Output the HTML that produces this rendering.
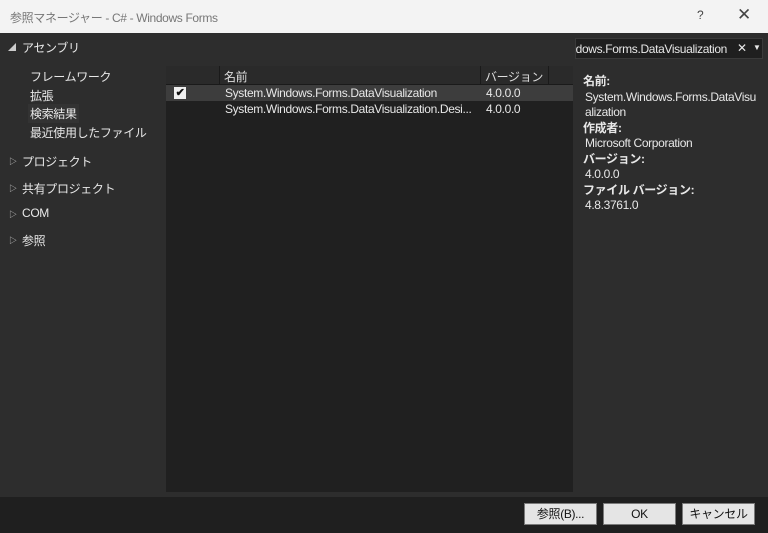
<!DOCTYPE html>
<html><head><meta charset="utf-8"><style>
*{margin:0;padding:0;box-sizing:border-box}
body{width:768px;height:533px;overflow:hidden;background:#2d2d2d;font-family:"Liberation Sans","Noto Sans CJK JP",sans-serif;font-size:12px;letter-spacing:-0.35px;color:#e8e8e8;position:relative}
.abs{position:absolute;white-space:nowrap}
#title{left:0;top:0;width:768px;height:33px;background:#f3f3f3;color:#777;font-size:12px}
#list{left:166px;top:66px;width:407px;height:426px;background:#202020}
.hdr{top:0;height:19px;background:#2a2a2a;border-right:1px solid #1a1a1a;border-bottom:1px solid #1a1a1a;padding:2px 4px;color:#ddd}
#bottom{left:0;top:497px;width:768px;height:36px;background:#1f1f1f}
.btn{top:503px;height:22px;background:#e5e5e5;border:1px solid #7a7a7a;color:#111;text-align:center;line-height:20px;font-size:12px}
.tri{font-size:8px;color:#ccc}
</style></head><body>
<div id="title" class="abs"><span class="abs" style="left:10px;top:9px">参照マネージャー - C# - Windows Forms</span>
<span class="abs" style="left:697px;top:8px;color:#444">?</span>
<span class="abs" style="left:737px;top:5px;color:#444;font-size:17px">✕</span></div>

<span class="abs tri" style="left:8px;top:42px">◢</span>
<span class="abs" style="left:22px;top:39px">アセンブリ</span>
<span class="abs" style="left:30px;top:68px">フレームワーク</span>
<span class="abs" style="left:30px;top:87px">拡張</span>
<span class="abs" style="left:28px;top:104px;background:#333;padding:1px 2px">検索結果</span>
<span class="abs" style="left:30px;top:124px">最近使用したファイル</span>
<span class="abs tri" style="left:9px;top:156px">▷</span><span class="abs" style="left:22px;top:153px">プロジェクト</span>
<span class="abs tri" style="left:9px;top:183px">▷</span><span class="abs" style="left:22px;top:180px">共有プロジェクト</span>
<span class="abs tri" style="left:9px;top:209px">▷</span><span class="abs" style="left:22px;top:206px">COM</span>
<span class="abs tri" style="left:9px;top:235px">▷</span><span class="abs" style="left:22px;top:232px">参照</span>

<div id="list" class="abs">
<div class="abs hdr" style="left:0;width:54px"></div>
<div class="abs hdr" style="left:54px;width:261px">名前</div>
<div class="abs hdr" style="left:315px;width:68px">バージョン</div>
<div class="abs hdr" style="left:383px;width:24px;border-right:none"></div>
<div class="abs" style="left:0;top:19px;width:407px;height:16px;background:#3d3d3d"></div>
<div class="abs" style="left:8px;top:21px;width:12px;height:12px;background:#f0f0f0;color:#111;font-size:11px;line-height:12px;text-align:center;font-weight:bold">✔</div>
<span class="abs" style="left:59px;top:20px">System.Windows.Forms.DataVisualization</span>
<span class="abs" style="left:320px;top:20px">4.0.0.0</span>
<span class="abs" style="left:59px;top:36px">System.Windows.Forms.DataVisualization.Desi...</span>
<span class="abs" style="left:320px;top:36px">4.0.0.0</span>
</div>

<div class="abs" style="left:575px;top:38px;width:188px;height:21px;background:#1f1f1f;border:1px solid #3a3a3a;overflow:hidden">
<span class="abs" style="right:35px;top:3px">System.Windows.Forms.DataVisualization</span>
<span class="abs" style="left:161px;top:2px;font-size:12px">✕</span>
<span class="abs" style="left:177px;top:4px;font-size:8px">▼</span></div>

<div class="abs" style="left:583px;top:74px;line-height:15.5px;white-space:normal;width:185px">
<b>名前:</b><br>
<span style="margin-left:2px">System.Windows.Forms.DataVisu</span><br>
<span style="margin-left:2px">alization</span><br>
<b>作成者:</b><br>
<span style="margin-left:2px">Microsoft Corporation</span><br>
<b>バージョン:</b><br>
<span style="margin-left:2px">4.0.0.0</span><br>
<b>ファイル バージョン:</b><br>
<span style="margin-left:2px">4.8.3761.0</span></div>

<div id="bottom" class="abs"></div>
<div class="abs btn" style="left:524px;width:73px">参照(B)...</div>
<div class="abs btn" style="left:603px;width:73px">OK</div>
<div class="abs btn" style="left:682px;width:73px">キャンセル</div>
</body></html>
